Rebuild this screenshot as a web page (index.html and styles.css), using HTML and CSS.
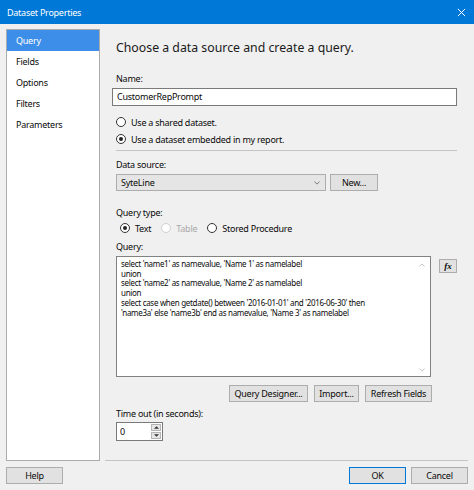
FILE: index.html
```html
<!DOCTYPE html>
<html lang="en">
  <head>
    <meta charset="UTF-8" />
    <title>Dataset Properties</title>
    <link rel="stylesheet" href="styles.css">
  </head>
  <body>
    <div class="window">
      <div class="titlebar">
        <span>Dataset Properties</span>
        <svg class="close" viewBox="0 0 10 10"><path d="M1 1L9 9M9 1L1 9" /></svg>
      </div>

      <div class="body">
        <ul class="nav">
          <li class="active">Query</li>
          <li>Fields</li>
          <li>Options</li>
          <li>Filters</li>
          <li>Parameters</li>
        </ul>

        <div class="main">
          <h1>Choose a data source and create a query.</h1>

          <div class="label label-name">Name:</div>
          <div class="textbox">CustomerRepPrompt</div>

          <div class="radio-list">
            <label class="radio"><span></span>Use a shared dataset.</label>
            <label class="radio checked"><span></span>Use a dataset embedded in my report.</label>
          </div>

          <div class="separator"></div>

          <div class="label label-source">Data source:</div>
          <div class="source-row">
            <div class="combo">
              SyteLine
              <svg viewBox="0 0 8 5"><path d="M0.5 0.5L4 4L7.5 0.5" /></svg>
            </div>
            <div class="button btn-new">New...</div>
          </div>

          <div class="label label-type">Query type:</div>
          <div class="radio-row">
            <label class="radio checked"><span></span>Text</label>
            <label class="radio disabled"><span></span>Table</label>
            <label class="radio"><span></span>Stored Procedure</label>
          </div>

          <div class="label label-query">Query:</div>
          <div class="query-row">
            <div class="query-box">
              <div class="query-text">select 'name1' as namevalue, 'Name 1' as namelabel
union
select 'name2' as namevalue, 'Name 2' as namelabel
union
select case when getdate() between '2016-01-01' and '2016-06-30' then
'name3a' else 'name3b' end as namevalue, 'Name 3' as namelabel</div>
              <div class="scrollbar">
                <svg viewBox="0 0 8 5"><path d="M0.5 4.5L4 1L7.5 4.5" /></svg>
                <svg viewBox="0 0 8 5"><path d="M0.5 0.5L4 4L7.5 0.5" /></svg>
              </div>
            </div>
            <div class="button btn-fx">fx</div>
          </div>

          <div class="query-buttons">
            <div class="button btn-designer">Query Designer...</div>
            <div class="button btn-import">Import...</div>
            <div class="button btn-refresh">Refresh Fields</div>
          </div>

          <div class="label label-timeout">Time out (in seconds):</div>
          <div class="spinner">
            <div class="spinner-value">0</div>
            <div class="spinner-arrows">
              <div><svg viewBox="0 0 6 3"><path d="M0 3L3 0L6 3Z" /></svg></div>
              <div><svg viewBox="0 0 6 3"><path d="M0 0L3 3L6 0Z" /></svg></div>
            </div>
          </div>
        </div>
      </div>

      <div class="footer">
        <div class="button btn-help">Help</div>
        <div class="footer-right">
          <div class="button btn-ok">OK</div>
          <div class="button btn-cancel">Cancel</div>
        </div>
      </div>
    </div>
  </body>
</html>
```

FILE: styles.css
```css
:root {
  --bg: #f0f0f0;
  --title: #0078d7;
  --select: #3d8ee8;
  --border: #adadad;
  --button: #e1e1e1;
  --text: #0a0a0a;
}

html,
body {
  margin: 0;
  overflow: hidden;
}

body {
  background: var(--bg);
  color: var(--text);
  font-family: "Noto Sans", "Open Sans", sans-serif;
  font-size: 9px;
  letter-spacing: -0.25px;
}

.window {
  width: 474px;
  height: 490px;
  display: flex;
  flex-direction: column;
}

.titlebar {
  height: 24px;
  background: var(--title);
  color: #fff;
  display: flex;
  align-items: center;
  justify-content: space-between;
  padding: 0 8px 0 7px;
  font-size: 9px;
}

.close {
  width: 9px;
  height: 9px;
  stroke: #fff;
  stroke-width: 1.1;
  fill: none;
}

.body {
  display: flex;
  padding: 5px 6px 0;
  height: 432px;
}

.nav {
  list-style: none;
  margin: 0;
  padding: 0;
  width: 94px;
  background: #fff;
  border: 1px solid #acacac;
}

.nav li {
  height: 21px;
  line-height: 21px;
  padding-left: 9px;
}

.nav li.active {
  background: var(--select);
  color: #fff;
}

.main {
  flex: 1;
  margin-left: 5px;
  padding: 0 11px 0 11px;
  border-bottom: 1px solid #c4c4c4;
  display: flex;
  flex-direction: column;
}

h1 {
  margin: 11px 0 0;
  font-size: 12.3px;
  font-weight: normal;
  letter-spacing: 0;
  line-height: 16px;
  color: #1a1a1a;
}

.label {
  line-height: 13px;
}

.label-name {
  margin-top: 16px;
}

.textbox {
  margin: 3px 0 0 -4px;
  height: 16px;
  line-height: 16px;
  background: #fff;
  border: 1px solid #7a7a7a;
  padding-left: 4px;
}

.radio-list {
  margin-top: 9px;
  display: flex;
  flex-direction: column;
  gap: 3px;
}

.radio {
  display: flex;
  align-items: center;
  height: 14px;
  gap: 5px;
}

.radio span {
  width: 10px;
  height: 10px;
  box-sizing: border-box;
  border: 1px solid #333;
  border-radius: 50%;
  background: #fff;
  display: flex;
  align-items: center;
  justify-content: center;
}

.radio.checked span::after {
  content: "";
  width: 4px;
  height: 4px;
  border-radius: 50%;
  background: #222;
}

.radio.disabled {
  color: #a8a8a8;
}

.radio.disabled span {
  border-color: #cfcfcf;
}

.separator {
  margin: 4px 0 0;
  border-top: 1px solid #c4c4c4;
}

.label-source {
  margin-top: 7px;
}

.source-row {
  margin-top: 3px;
  display: flex;
  gap: 4px;
}

.combo {
  width: 199px;
  height: 15px;
  line-height: 15px;
  padding-left: 4px;
  background: #e5e5e5;
  border: 1px solid var(--border);
  display: flex;
  align-items: center;
  justify-content: space-between;
  padding-right: 5px;
}

.combo svg {
  width: 6px;
  height: 4px;
  fill: none;
  stroke: #555;
  stroke-width: 1;
}

.button {
  height: 15px;
  line-height: 15px;
  background: var(--button);
  border: 1px solid var(--border);
  text-align: center;
  box-sizing: content-box;
}

.btn-new {
  width: 46px;
}

.label-type {
  margin-top: 15px;
}

.radio-row {
  margin: 2px 0 0 4px;
  display: flex;
  gap: 10px;
}

.label-query {
  margin-top: 5px;
}

.query-row {
  margin-top: 3px;
  display: flex;
  align-items: flex-start;
  gap: 8px;
}

.query-box {
  width: 313px;
  height: 119px;
  background: #fff;
  border: 1px solid #828282;
  display: flex;
}

.query-text {
  flex: 1;
  padding: 2px 0 0 4px;
  white-space: pre;
  font-size: 8px;
  line-height: 9.7px;
  letter-spacing: -0.3px;
  overflow: hidden;
}

.scrollbar {
  width: 17px;
  display: flex;
  flex-direction: column;
  justify-content: space-between;
  align-items: center;
  padding: 6px 0 4px;
}

.scrollbar svg {
  width: 6px;
  height: 4px;
  fill: none;
  stroke: #b0b0b0;
  stroke-width: 1;
}

.btn-fx {
  margin-top: 3px;
  width: 16px;
  height: 12px;
  line-height: 12px;
  font-family: "Liberation Serif", serif;
  font-style: italic;
  font-weight: bold;
  font-size: 9px;
  letter-spacing: 0;
}

.query-buttons {
  margin: 8px 25px 0 0;
  display: flex;
  justify-content: flex-end;
  gap: 6px;
}

.btn-designer {
  width: 77px;
}

.btn-import {
  width: 43px;
}

.btn-refresh {
  width: 65px;
}

.label-timeout {
  margin-top: 5px;
}

.spinner {
  margin-top: 2px;
  width: 45px;
  height: 17px;
  background: #fff;
  border: 1px solid #7a7a7a;
  display: flex;
}

.spinner-value {
  flex: 1;
  padding-left: 3px;
  line-height: 17px;
}

.spinner-arrows {
  width: 10px;
  display: flex;
  flex-direction: column;
  gap: 1px;
  padding: 1px 1px 1px 0;
}

.spinner-arrows div {
  flex: 1;
  background: #e6e6e6;
  border: 1px solid #b5b5b5;
  display: flex;
  align-items: center;
  justify-content: center;
}

.spinner-arrows svg {
  width: 5px;
  height: 3px;
  fill: #333;
}

.footer {
  display: flex;
  justify-content: space-between;
  padding: 6px 6px 0;
}

.footer-right {
  display: flex;
  gap: 5px;
}

.btn-help {
  width: 55px;
}

.btn-ok {
  width: 55px;
  border-color: var(--title);
}

.btn-cancel {
  width: 55px;
}
```
